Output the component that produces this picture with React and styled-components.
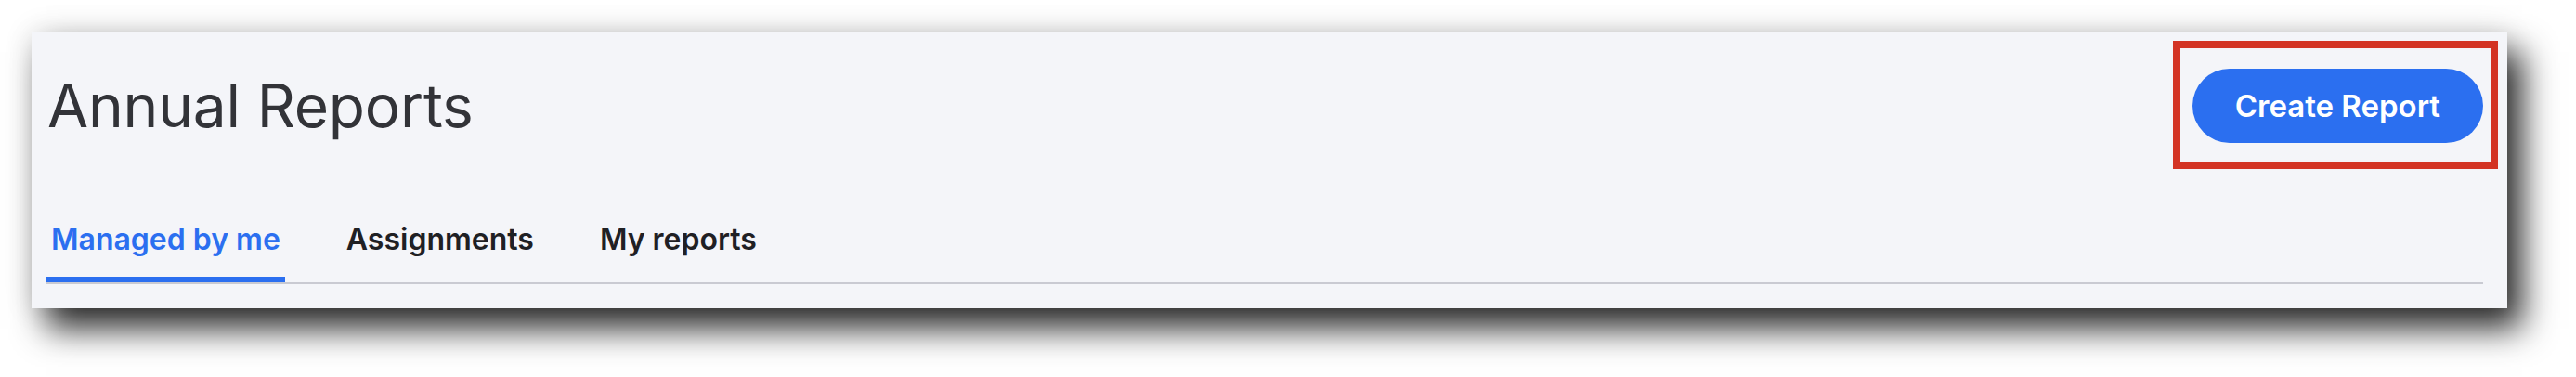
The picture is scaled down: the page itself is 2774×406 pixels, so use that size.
import React, { useState } from "react";
import styled, { createGlobalStyle } from "styled-components";

const GlobalStyle = createGlobalStyle`
  html, body {
    margin: 0;
    padding: 0;
    background: #ffffff;
  }
  body {
    font-family: Inter, "Noto Sans", Arial, sans-serif;
  }
`;

const Page = styled.div`
  width: 2774px;
  height: 406px;
  padding: 34px 74px 0 34px;
  box-sizing: border-box;
`;

const Panel = styled.div`
  height: 298px;
  box-sizing: border-box;
  background: #f4f5f9;
  padding: 40px 26px 26px 16px;
  display: flex;
  flex-direction: column;
  box-shadow: 16px 22px 34px rgba(0, 0, 0, 0.82), 0 0 30px rgba(0, 0, 0, 0.12);
`;

const Header = styled.div`
  display: flex;
  align-items: center;
  justify-content: space-between;
  height: 80px;
`;

const Title = styled.h1`
  margin: 0;
  padding-left: 1px;
  font-size: 64px;
  line-height: 80px;
  font-weight: 400;
  color: #323338;
  letter-spacing: -0.2px;
`;

const Highlight = styled.div`
  position: relative;
  &::after {
    content: "";
    position: absolute;
    left: -21px;
    right: -16px;
    top: -30px;
    bottom: -28px;
    border: 8px solid #d33425;
    pointer-events: none;
  }
`;

const PrimaryButton = styled.button`
  height: 80px;
  padding: 0 46px;
  border: none;
  border-radius: 40px;
  background: #2b6ff0;
  color: #ffffff;
  font-family: inherit;
  font-size: 33px;
  font-weight: 600;
  cursor: pointer;
`;

const Tabs = styled.div`
  margin-top: 84px;
  display: flex;
  gap: 61px;
  border-bottom: 2px solid #c9cad2;
`;

const Tab = styled.div`
  padding: 0 5px 20px;
  font-size: 32px;
  line-height: 40px;
  font-weight: 600;
  color: ${({ $active }) => ($active ? "#2b6ff0" : "#1f2024")};
  border-bottom: 6px solid ${({ $active }) => ($active ? "#2b6ff0" : "transparent")};
  cursor: pointer;
`;

const tabs = ["Managed by me", "Assignments", "My reports"];

export default function App() {
  const [active, setActive] = useState(0);
  return (
    <>
      <GlobalStyle />
      <Page>
        <Panel>
          <Header>
            <Title>Annual Reports</Title>
            <Highlight>
              <PrimaryButton>Create Report</PrimaryButton>
            </Highlight>
          </Header>
          <Tabs>
            {tabs.map((t, i) => (
              <Tab key={t} $active={i === active} onClick={() => setActive(i)}>
                {t}
              </Tab>
            ))}
          </Tabs>
        </Panel>
      </Page>
    </>
  );
}
